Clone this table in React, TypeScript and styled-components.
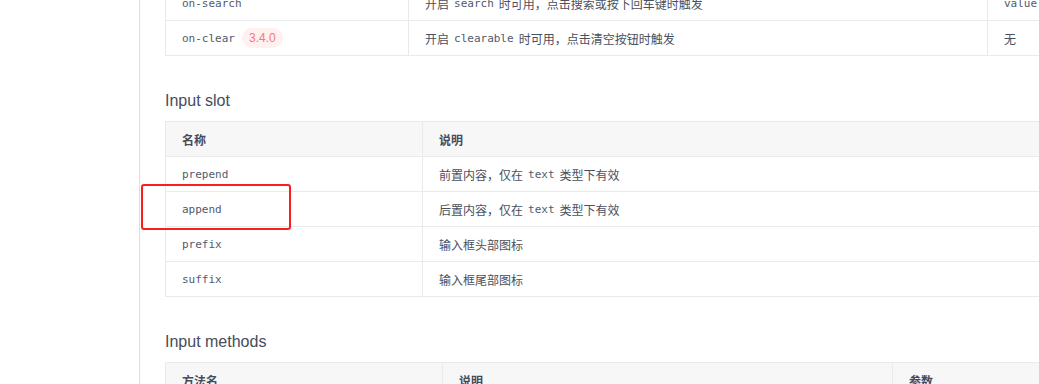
import React from "react";
import styled, { createGlobalStyle } from "styled-components";

const GlobalStyle = createGlobalStyle`
  html, body {
    margin: 0;
    padding: 0;
    overflow: hidden;
    background: #fff;
  }
  body {
    font-family: "Liberation Sans", "Noto Sans CJK SC", sans-serif;
    color: #495060;
  }
`;

const Page = styled.div`
  display: flex;
  min-height: 100vh;
`;

const Sidebar = styled.aside`
  flex: 0 0 139px;
  border-right: 1px solid #dcdee2;
  background: #fff;
`;

const Content = styled.main`
  flex: 0 0 auto;
  padding-left: 25px;
  margin-top: -15px;
`;

const Heading = styled.h3`
  margin: 33px 0 8px;
  font-family: "Liberation Sans", sans-serif;
  font-size: 16px;
  line-height: 24px;
  font-weight: normal;
  color: #464c5b;
`;

const TableWrap = styled.div`
  position: relative;
`;

const Table = styled.div<{ $width: number }>`
  width: ${(p) => p.$width}px;
  border-left: 1px solid #e9eaec;
  border-top: 1px solid #e9eaec;
  font-size: 12px;
`;

const Row = styled.div<{ $cols: string; $head?: boolean }>`
  display: grid;
  grid-template-columns: ${(p) => p.$cols};
  height: 35px;
  box-sizing: border-box;
  border-bottom: 1px solid #e9eaec;
  background: ${(p) => (p.$head ? "#f7f7f7" : "#fff")};
  font-weight: ${(p) => (p.$head ? "bold" : "normal")};
  color: ${(p) => (p.$head ? "#464c5b" : "#495060")};
`;

const Cell = styled.div`
  display: flex;
  align-items: center;
  padding: 0 16px;
  border-right: 1px solid #e9eaec;
  white-space: pre;
  overflow: hidden;
  font-family: "Noto Sans CJK SC", "Liberation Sans", sans-serif;
`;

const Name = styled.span`
  font-family: "DejaVu Sans Mono", "Liberation Mono", monospace;
  font-size: 11px;
  color: #515a6e;
`;

const Code = styled.code`
  font-family: "DejaVu Sans Mono", "Liberation Mono", monospace;
  font-size: 11px;
  color: #515a6e;
  padding: 0 5px;
`;

const Version = styled.span`
  display: inline-flex;
  align-items: center;
  height: 20px;
  margin-left: 7px;
  padding: 0 7px;
  border-radius: 10px;
  background: #fff1f0;
  color: #f7787a;
  font-family: "Liberation Sans", sans-serif;
  font-size: 12px;
`;

const Highlight = styled.div`
  position: absolute;
  left: -24px;
  top: 63px;
  width: 150px;
  height: 46px;
  box-sizing: border-box;
  border: 2px solid #fa1e1e;
  border-radius: 3px;
  pointer-events: none;
`;

const eventCols = "243px 579px 200px";
const slotCols = "257px 1fr";
const methodCols = "277px 450px 1fr";

type Slot = { name: string; desc: React.ReactNode };

const slots: Slot[] = [
  {
    name: "prepend",
    desc: (
      <>
        前置内容，仅在<Code>text</Code>类型下有效
      </>
    ),
  },
  {
    name: "append",
    desc: (
      <>
        后置内容，仅在<Code>text</Code>类型下有效
      </>
    ),
  },
  { name: "prefix", desc: "输入框头部图标" },
  { name: "suffix", desc: "输入框尾部图标" },
];

export default function App() {
  return (
    <>
      <GlobalStyle />
      <Page>
        <Sidebar />
        <Content>
          <Table $width={1100}>
            <Row $cols={eventCols}>
              <Cell>
                <Name>on-search</Name>
              </Cell>
              <Cell>
                开启<Code>search</Code>时可用，点击搜索或按下回车键时触发
              </Cell>
              <Cell>
                <Name>value</Name>
              </Cell>
            </Row>
            <Row $cols={eventCols}>
              <Cell>
                <Name>on-clear</Name>
                <Version>3.4.0</Version>
              </Cell>
              <Cell>
                开启<Code>clearable</Code>时可用，点击清空按钮时触发
              </Cell>
              <Cell>无</Cell>
            </Row>
          </Table>

          <Heading>Input slot</Heading>
          <TableWrap>
            <Table $width={1100}>
              <Row $cols={slotCols} $head>
                <Cell>名称</Cell>
                <Cell>说明</Cell>
              </Row>
              {slots.map((s) => (
                <Row $cols={slotCols} key={s.name}>
                  <Cell>
                    <Name>{s.name}</Name>
                  </Cell>
                  <Cell>{s.desc}</Cell>
                </Row>
              ))}
            </Table>
            <Highlight />
          </TableWrap>

          <Heading>Input methods</Heading>
          <Table $width={1100}>
            <Row $cols={methodCols} $head>
              <Cell>方法名</Cell>
              <Cell>说明</Cell>
              <Cell>参数</Cell>
            </Row>
          </Table>
        </Content>
      </Page>
    </>
  );
}
